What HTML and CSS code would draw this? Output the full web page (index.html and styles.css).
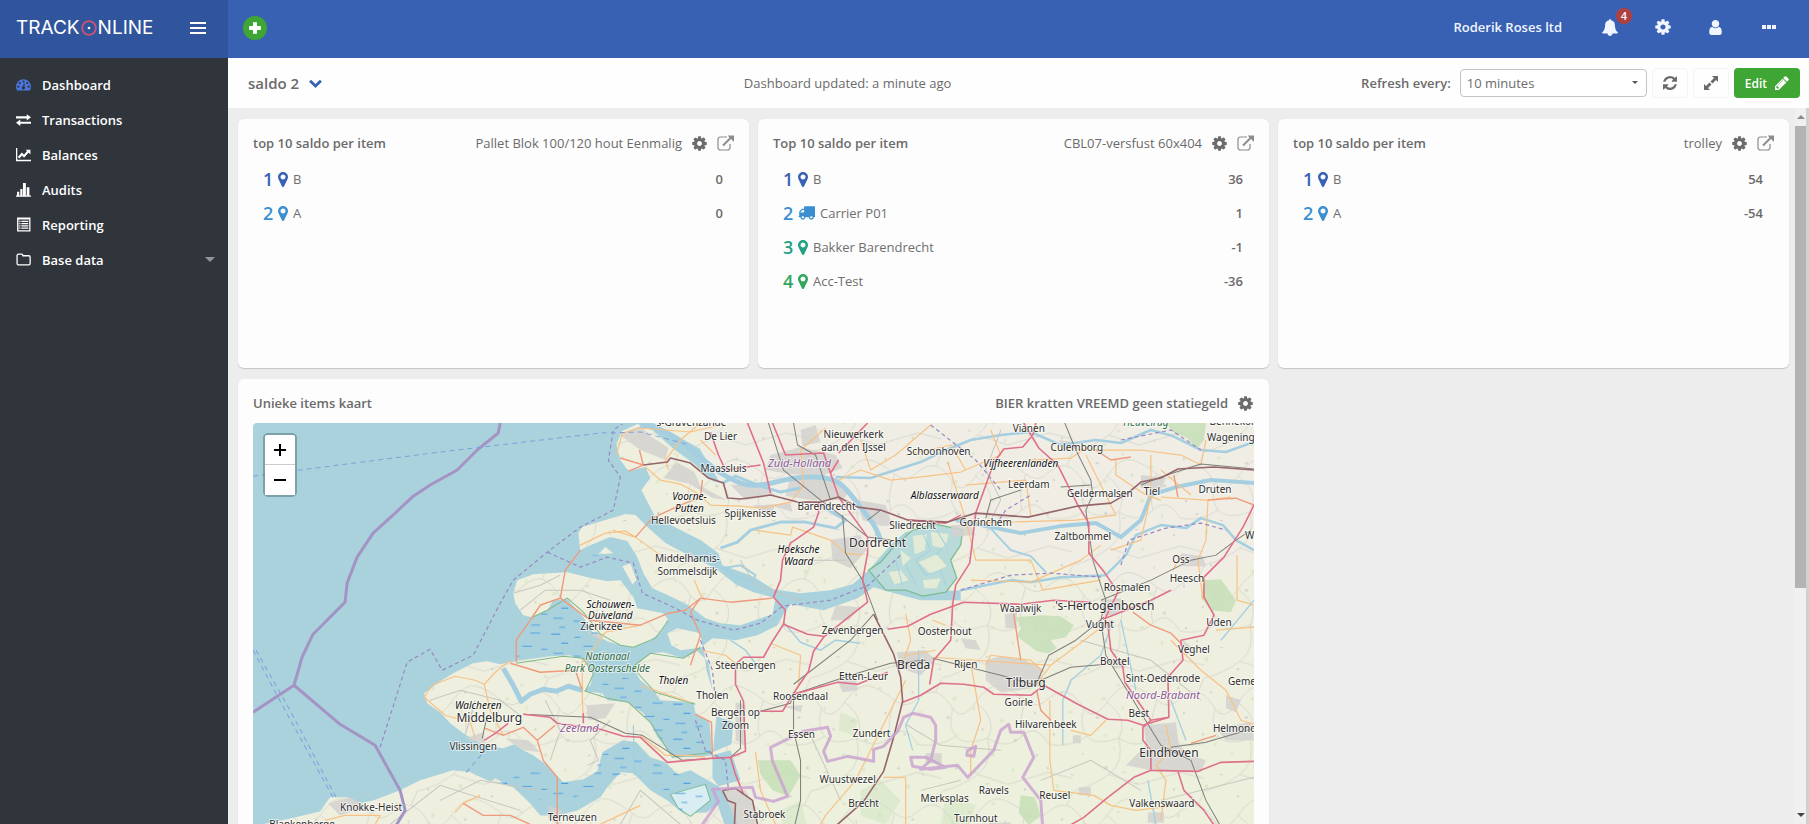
FILE: index.html
```html
<!DOCTYPE html>
<html lang="en">
<head>
<meta charset="utf-8">
<title>TrackOnline - Dashboard</title>
<link rel="stylesheet" href="styles.css">
</head>
<body>
<svg class="defs" aria-hidden="true">
  <symbol id="cog" viewBox="0 0 1792 1792"><path d="M1152 896q0-106-75-181t-181-75-181 75-75 181 75 181 181 75 181-75 75-181zm512-109v222q0 12-8 23t-20 13l-185 28q-19 54-39 91 35 50 107 138 10 12 10 25t-9 23q-27 37-99 108t-94 71q-12 0-26-9l-138-108q-44 23-91 38-16 136-29 186-7 28-36 28h-222q-14 0-24.500-8.500t-11.500-21.500l-28-184q-49-16-90-37l-141 107q-10 9-25 9-14 0-25-11-126-114-165-168-7-10-7-23 0-12 8-23 15-21 51-66.500t54-70.500q-27-50-41-99l-183-27q-13-2-21-12.500t-8-23.500v-222q0-12 8-23t19-13l186-28q14-46 39-92-40-57-107-138-10-12-10-24 0-10 9-23 26-36 98.500-107.500t94.500-71.500q13 0 26 10l138 107q44-23 91-38 16-136 29-186 7-28 36-28h222q14 0 24.500 8.500t11.500 21.500l28 184q49 16 90 37l142-107q9-9 24-9 13 0 25 10 129 119 165 170 7 8 7 22 0 12-8 23-15 21-51 66.500t-54 70.500q26 50 41 98l183 28q13 2 21 12.500t8 23.500z"/></symbol>
  <symbol id="pin" viewBox="384 128 1024 1536"><path d="M1152 640q0-106-75-181t-181-75-181 75-75 181 75 181 181 75 181-75 75-181zm256 0q0 109-33 179l-364 774q-16 33-47.500 52t-67.500 19-67.500-19-46.500-52l-365-774q-33-70-33-179 0-212 150-362t362-150 362 150 150 362z"/></symbol>
  <symbol id="truck" viewBox="0 256 1792 1408"><path d="M640 1408q0-52-38-90t-90-38-90 38-38 90 38 90 90 38 90-38 38-90zm-384-512h384v-256h-158q-13 0-22 9l-195 195q-9 9-9 22v30zm1280 512q0-52-38-90t-90-38-90 38-38 90 38 90 90 38 90-38 38-90zm256-1088v1024q0 15-4 26.500t-13.500 18.500-16.500 11.500-23.500 6-22.500 2-25.500 0-22.500-.5q0 106-75 181t-181 75-181-75-75-181h-384q0 106-75 181t-181 75-181-75-75-181h-64q-3 0-22.500.5t-25.500 0-22.500-2-23.500-6-16.500-11.500-13.500-18.500-4-26.500q0-26 19-45t45-19v-320q0-8-.5-35t0-38 2.500-34.500 6.500-37 14-30.500 22.500-30l198-198q19-19 50.500-32t58.500-13h160v-192q0-26 19-45t45-19h1024q26 0 45 19t19 45z"/></symbol>
  <symbol id="user" viewBox="256 128 1280 1536"><path d="M1536 1399q0 109-62.500 187t-150.500 78h-854q-88 0-150.500-78t-62.500-187q0-85 8.500-160.500t31.500-152 58.500-131 94-89 134.500-34.500q131 128 313 128t313-128q76 0 134.500 34.500t94 89 58.500 131 31.500 152 8.500 160.500zm-256-887q0 159-112.500 271.500t-271.500 112.500-271.500-112.500-112.500-271.500 112.500-271.500 271.500-112.500 271.500 112.500 112.500 271.500z"/></symbol>
  <symbol id="refresh" viewBox="128 128 1536 1536"><path d="M1639 1056q0 5-1 7-64 268-268 434.500t-478 166.500q-146 0-282.500-55t-243.500-157l-129 129q-19 19-45 19t-45-19-19-45v-448q0-26 19-45t45-19h448q26 0 45 19t19 45-19 45l-137 137q71 66 161 102t187 36q134 0 250-65t186-179q11-17 53-117 8-23 30-23h192q13 0 22.500 9.500t9.500 22.500zm25-800v448q0 26-19 45t-45 19h-448q-26 0-45-19t-19-45 19-45l138-138q-148-137-349-137-134 0-250 65t-186 179q-11 17-53 117-8 23-30 23h-199q-13 0-22.500-9.500t-9.500-22.500v-7q65-268 270-434.500t480-166.500q146 0 284 55.500t245 156.500l130-129q19-19 45-19t45 19 19 45z"/></symbol>
  <symbol id="pencil" viewBox="128 128 1536 1536"><path d="M491 1536l91-91-235-235-91 91v107h128v128h107zm523-928q0-22-22-22-10 0-17 7l-542 542q-7 7-7 17 0 22 22 22 10 0 17-7l542-542q7-7 7-17zm-54-192l416 416-832 832h-416v-416zm683 96q0 53-37 90l-166 166-416-416 166-165q36-38 90-38 53 0 91 38l235 234q37 39 37 91z"/></symbol>
  <symbol id="bell" viewBox="64 0 1664 1792"><path d="M1728 1408q0 52-38 90t-90 38h-448q0 106-75 181t-181 75-181-75-75-181h-448q-52 0-90-38t-38-90q50-42 91-88t85-119.500 74.500-158.500 50-206 19.500-260q0-152 117-282.500t307-158.500q-8-19-8-39 0-40 28-68t68-28 68 28 28 68q0 20-8 39 190 28 307 158.500t117 282.500q0 139 19.500 260t50 206 74.500 158.500 85 119.500 91 88z"/></symbol>
  <symbol id="external" viewBox="0 0 17 16"><path d="M10 2H3.500A2.500 2.500 0 0 0 1 4.500v8A2.500 2.500 0 0 0 3.500 15h7a2.500 2.500 0 0 0 2.500-2.500V9" fill="none" stroke="currentColor" stroke-width="1.200"/><path d="M6 10.500 14 2.500" stroke="currentColor" stroke-width="2"/><path d="M10.500.5H17V7z"/></symbol>
  <symbol id="expand" viewBox="0 0 14 14"><path d="M8 0h6v6l-2-2-3.500 3.500L6.500 5.500 10 2zM6 14H0V8l2 2 3.500-3.500 2 2L4 12z"/></symbol>
</svg>

<div class="app">
  <aside class="sidebar">
    <div class="brand">
      <a class="logo" href="#" aria-label="TrackOnline"><span>TRACK</span><svg class="logo-o" viewBox="0 0 14 14"><circle cx="7" cy="7" r="6" fill="none" stroke="#cf5274" stroke-width="1.600"/><circle cx="7" cy="7" r="1.200" fill="#fff"/></svg><span>NLINE</span></a>
      <button class="menu" aria-label="Toggle menu"><i></i><i></i><i></i></button>
    </div>
    <nav class="nav">
      <a href="#"><svg class="nav-icon blue" viewBox="0 0 14 14"><path fill-rule="evenodd" d="M7 2a7 7 0 0 0-6 10.500h12A7 7 0 0 0 7 2zM7 3.200a1 1 0 1 1 0 2 1 1 0 0 1 0-2zM3.500 4.700a1 1 0 1 1 0 2 1 1 0 0 1 0-2zM2.200 8a1 1 0 1 1 0 2 1 1 0 0 1 0-2zM11.800 8a1 1 0 1 1 0 2 1 1 0 0 1 0-2zM10.500 4.700a1 1 0 1 1 0 2 1 1 0 0 1 0-2zM8.300 6l-.6 2.800a1.500 1.500 0 1 1-1.100-.2L7.400 5.800z"/></svg><span>Dashboard</span></a>
      <a href="#"><svg class="nav-icon" viewBox="0 0 14 14"><path d="M0 4h10V2l4 3-4 3V6H0zM14 9H4V7L0 10l4 3v-2h10z"/></svg><span>Transactions</span></a>
      <a href="#"><svg class="nav-icon" viewBox="0 0 14 14"><path d="M0 1h1.200v11H14v1.200H0z"/><path d="M2.500 10 5.500 6.500l2 2L11.500 4" fill="none" stroke="currentColor" stroke-width="2"/><path d="M9 2.500h4.500V7z"/></svg><span>Balances</span></a>
      <a href="#"><svg class="nav-icon" viewBox="0 0 14 14"><path d="M0 12.500h14v1.300H0zM1 9h2v4H1zM4 6.500h2V13H4zM6.500 1h2.700v12H6.500zM10 5h2.500v8H10z"/></svg><span>Audits</span></a>
      <a href="#"><svg class="nav-icon" viewBox="0 0 14 14"><path fill-rule="evenodd" d="M1 .5h12.500v13H1zM2.300 2.300v10h10v-10z"/><path d="M3 3.500h1.200v1.200H3zM5 3.500h6.500v1.200H5zM3 5.600h1.200v1.200H3zM5 5.600h6.500v1.200H5zM3 7.700h1.200v1.200H3zM5 7.700h6.500v1.200H5zM3 9.800h1.200V11H3zM5 9.800h6.500V11H5z"/></svg><span>Reporting</span></a>
      <a href="#"><svg class="nav-icon" viewBox="0 0 14 14"><path d="M1 3.500Q1 2 2.500 2H5q1.500 0 1.500 1.500H12q1.200 0 1.200 1.300v6q0 1.200-1.200 1.200H2.300Q1 12 1 10.800z" fill="none" stroke="currentColor" stroke-width="1.200"/></svg><span>Base data</span><b class="caret"></b></a>
    </nav>
  </aside>

  <div class="main">
    <header class="topbar">
      <button class="add" aria-label="Add"><svg viewBox="0 0 12 12"><path d="M4.300 1h3.400v3.300H11v3.400H7.700V11H4.300V7.700H1V4.300h3.300z"/></svg></button>
      <div class="account">
        <span class="company">Roderik Roses ltd</span>
        <button class="top-btn" aria-label="Notifications"><svg class="bell"><use href="#bell"/></svg><span class="badge">4</span></button>
        <button class="top-btn" aria-label="Settings"><svg class="cog-top"><use href="#cog"/></svg></button>
        <button class="top-btn" aria-label="User"><svg class="user"><use href="#user"/></svg></button>
        <button class="top-btn" aria-label="More"><svg class="dots" viewBox="0 0 14 4"><path d="M0 0h4v4H0zM5 0h4v4H5zM10 0h4v4h-4z"/></svg></button>
      </div>
    </header>

    <div class="toolbar">
      <button class="picker">saldo 2 <svg viewBox="0 0 12 8"><path d="M1 1.500 6 6.300 11 1.500" fill="none" stroke="currentColor" stroke-width="2.600"/></svg></button>
      <span class="updated">Dashboard updated: a minute ago</span>
      <div class="actions">
        <label for="every">Refresh every:</label>
        <div class="select"><select id="every"><option>10 minutes</option></select></div>
        <button class="square" aria-label="Refresh"><svg><use href="#refresh"/></svg></button>
        <button class="square" aria-label="Full screen"><svg><use href="#expand"/></svg></button>
        <button class="edit">Edit <svg><use href="#pencil"/></svg></button>
      </div>
    </div>

    <div class="content">
      <div class="grid">
        <section class="card">
          <header><h2>top 10 saldo per item</h2><span>Pallet Blok 100/120 hout Eenmalig</span><button aria-label="Settings"><svg class="cog"><use href="#cog"/></svg></button><button aria-label="Open"><svg class="external"><use href="#external"/></svg></button></header>
          <ol>
            <li class="c1"><b>1</b><svg class="pin"><use href="#pin"/></svg><span>B</span><strong>0</strong></li>
            <li class="c2"><b>2</b><svg class="pin"><use href="#pin"/></svg><span>A</span><strong>0</strong></li>
          </ol>
        </section>
        <section class="card">
          <header><h2>Top 10 saldo per item</h2><span>CBL07-versfust 60x404</span><button aria-label="Settings"><svg class="cog"><use href="#cog"/></svg></button><button aria-label="Open"><svg class="external"><use href="#external"/></svg></button></header>
          <ol>
            <li class="c1"><b>1</b><svg class="pin"><use href="#pin"/></svg><span>B</span><strong>36</strong></li>
            <li class="c2"><b>2</b><svg class="truck"><use href="#truck"/></svg><span>Carrier P01</span><strong>1</strong></li>
            <li class="c3"><b>3</b><svg class="pin"><use href="#pin"/></svg><span>Bakker Barendrecht</span><strong>-1</strong></li>
            <li class="c4"><b>4</b><svg class="pin"><use href="#pin"/></svg><span>Acc-Test</span><strong>-36</strong></li>
          </ol>
        </section>
        <section class="card">
          <header><h2>top 10 saldo per item</h2><span>trolley</span><button aria-label="Settings"><svg class="cog"><use href="#cog"/></svg></button><button aria-label="Open"><svg class="external"><use href="#external"/></svg></button></header>
          <ol>
            <li class="c1"><b>1</b><svg class="pin"><use href="#pin"/></svg><span>B</span><strong>54</strong></li>
            <li class="c2"><b>2</b><svg class="pin"><use href="#pin"/></svg><span>A</span><strong>-54</strong></li>
          </ol>
        </section>
        <section class="card wide">
          <header><h2>Unieke items kaart</h2><span class="strong">BIER kratten VREEMD geen statiegeld</span><button aria-label="Settings"><svg class="cog"><use href="#cog"/></svg></button></header>
          <div class="map">
            <svg class="map-art" viewBox="253 423 1000 420" preserveAspectRatio="xMinYMin slice">
              <defs>
                <pattern id="waves" width="61" height="35" patternUnits="userSpaceOnUse"><path d="M2 4h9M25 7h6M42 3h10M12 13h7M34 16h10M53 19h6M4 23h10M24 26h7M43 30h9M10 32h6" stroke="#4f9fe6" stroke-width="1"/></pattern>
                <pattern id="fields" width="149" height="127" patternUnits="userSpaceOnUse"><path d="M3 5h2v2h-2zM27 12h3v1h-3zM61 4h2v3h-2zM91 21h3v1h-3zM129 26h2v2h-2zM44 33h2v2h-2zM17 56h2v2h-2zM73 49h3v1h-3zM110 58h1v3h-1zM139 77h2v2h-2zM52 81h3v2h-3zM9 98h2v2h-2zM87 93h2v2h-2zM119 104h3v2h-3zM38 118h2v1h-2zM70 112h1v2h-1zM141 119h2v2h-2z" fill="#cfd0c8"/><path d="M12 22h3v4h-3zM78 9h4v2h-4zM117 6h2v4h-2zM58 62h4v3h-4zM97 40h3v3h-3zM133 51h3v4h-3zM24 76h4v2h-4zM78 71h2v4h-2zM105 84h4v3h-4zM60 99h3v3h-3zM21 108h3v2h-3zM96 118h4v3h-4z" fill="#dbe8c8"/></pattern>
                <pattern id="lanes" width="131" height="113" patternUnits="userSpaceOnUse"><path d="M0 20Q10 12 18 14T35 30 58 24 84 8 108 22 131 20M18 14 24 0M35 30Q30 48 38 58T70 60Q80 40 58 24M38 58Q20 70 0 66M70 60Q90 72 104 58T131 66M108 22Q100 44 104 58M70 60Q76 84 60 96T24 113M60 96 90 106 131 94M0 94 24 100" fill="none" stroke="#cfcfc8" stroke-width=".7"/></pattern>
                <path id="land" d="M653 423 680 438 702 450 716 466 736 479 728 485 712 481 694 464 672 448 652 430 637 424 622 431 616 444 620 460 628 471 645 467 650 478 641 490 655 517 680 530 700 540 718 553 722 565 750 575 773 589 800 593 830 590 852 584 868 570 890 545 905 532 918 530V545L922 560 905 585 925 592 960 590V600H920L890 592 873 587 857 598 823 610 790 604 783 614 777 625 757 635 735 640 712 638 703 645 706 670 712 690 716 716 733 722 731 744 712 752 712 778 718 786 732 804 738 824V843H1253V423ZM578 533 582 527 605 520 625 514 635 515 647 527 665 543 690 556 715 568 735 584 753 592 775 598 772 614 760 618 740 625 720 623 705 618 688 605 672 597 652 588 643 573 637 557 627 541 610 537 588 546 580 550ZM513 593 517 580 533 574 567 572 587 577 607 581 620 580 633 597 637 608 663 613 668 620 660 632 650 640 633 647 620 645 607 641 593 633 583 617 567 599 553 600 547 610 532 617 523 615 515 603ZM424 693 440 681 455 672 473 663 487 661 500 664 520 660 550 656 570 655 582 659 593 673 590 685 583 691 602 693 607 700 627 702 643 713 650 723 657 737 673 757 697 757 712 755 730 750 740 780 718 786 690 770 677 774 665 762 650 757 636 742 623 740 612 746 602 752 597 771 583 779 563 782 547 765 533 755 523 750 514 744 503 748 483 745 463 733 450 723 440 712 427 703ZM632 667 650 653 663 652 683 658 697 651 708 662 712 690 716 716 712 757 709 722 695 713 693 702 660 700 653 690 640 680ZM667 633 677 628 700 633 702 647 680 650 671 645ZM253 843 262 824 290 818 320 811 330 797 347 797 358 803 373 800 400 790 420 780 453 770 470 772 487 780 513 787 530 803 540 815 557 815 577 810 600 797 607 787 620 772 633 773 650 790 667 800 683 813 706 812 717 804 724 824V843ZM598 554 605 547 613 553ZM622 566 630 563 636 580 632 584ZM495 778 502 782 490 782Z"/>
              </defs>
              <rect x="253" y="423" width="1000" height="420" fill="#aad2dd"/>
              <use href="#land" fill="#efefdf"/>
              <path d="M700 423H1253V560L1170 600 1040 560 940 545 905 530 850 550 780 520 730 500 700 450Z" fill="#f0eee4"/>
              <path d="M780 730H1253V843H750Z" fill="#ecf0dc"/>
              <use href="#land" fill="url(#lanes)"/><use href="#land" fill="url(#fields)"/>

              <g class="wood">
                <path d="M1015 617 1040 615 1060 616 1073 625 1065 637 1050 640 1056 648 1048 653 1036 651 1016 636 1020 628Z"/>
                <path d="M1165 423H1205L1203 440 1196 449 1186 438 1172 432Z"/>
                <path d="M1203 580 1220 579 1235 600 1230 612 1210 610 1200 597Z"/>
                <path d="M757 760 790 760 800 775 788 796 772 790 760 774Z"/>
                <path d="M1020 795 1034 797 1040 815 1028 825 1018 812Z"/>
                <path class="faint" d="M860 790 880 780 900 800 885 824 860 815ZM945 795 975 805 968 824 940 824ZM780 810 800 800 806 824H782ZM840 712 858 720 852 735 838 730Z"/>
              </g>
              <path d="M868 570 880 562 892 548 912 530 935 524 962 530 960 545 950 560 956 578 945 592 922 596 905 590 885 590Z" fill="#b8dbd9" stroke="#7dbb92" stroke-width="1.300"/>
              <path d="M912 536 926 534 924 550 914 554ZM930 532 948 534 944 548 932 546ZM900 550 910 558 902 566ZM918 562 936 554 946 566 930 574ZM888 572 900 570 908 580 894 584ZM922 580 940 578 936 588 924 588Z" fill="#e3ebd6"/>
              <path d="M922 533 930 550 915 560 925 575 940 570 945 585M936 530 945 545 935 555M905 565 916 585M895 560 902 585" class="stream"/>
              <g class="urban">
                <path d="M663 478 676 462 694 472 700 486 726 500 712 498 690 484ZM618 434 640 426 650 436 668 448 665 460 640 450Z"/>
                <path d="M770 455 800 447 835 455 842 468 820 476 790 474 765 470ZM790 476 830 478 850 490 842 500 810 500 785 496ZM730 485 760 484 775 495 745 500ZM800 430 815 425 820 442 802 446ZM857 500 885 505 890 520 905 525 880 526 862 520ZM830 540 860 535 866 550 850 568 832 560ZM752 505 775 505 770 515ZM770 505 790 503 792 512Z"/>
                <path d="M896 652 925 650 935 660 920 675 900 668ZM860 607 848 620 830 620 835 605ZM783 706 802 705 800 712ZM837 680 855 676 857 690 842 692ZM735 702 745 705 744 745 735 740Z"/>
                <path d="M985 660 1000 656 1025 660 1040 668 1042 685 1020 690 1000 692 985 680ZM1004 614 1016 612 1016 628 1005 628ZM1100 600 1120 598 1122 612 1104 616ZM1143 725 1175 722 1178 745 1190 755 1205 760 1200 772 1150 770 1125 765 1145 745ZM1180 553 1202 556 1205 566 1182 566ZM950 525 970 525 975 535 952 537ZM960 638 975 640 980 650 965 648ZM1215 728 1250 722 1253 740 1225 740ZM1140 475 1165 478 1160 490 1140 488ZM1058 440 1072 442 1066 452ZM1195 650 1185 655 1182 640ZM1225 695 1240 700 1235 712 1225 708Z"/>
                <path d="M465 738 483 732 485 744ZM505 738 528 740 540 752 524 750 515 745ZM586 705 615 703 605 718 588 720ZM690 550 695 558 684 562ZM328 803 350 797 368 806 340 815ZM548 805 562 810 558 824 548 818ZM586 632 605 634 600 640Z"/>
                <path d="M722 790 745 790 755 808 755 843 735 843 733 815Z"/>
                <path d="M925 753h16v10h-16zM988 822h22v14h-22zM1078 787h12v8h-12zM1147 812h16v10h-16zM1072 735h8v8h-8zM1112 660h12v8h-12z"/>
              </g>
              <g class="river">
                <path d="M640 425Q665 428 685 445T716 470T740 483 775 482 815 477 840 484 856 502 870 520 880 540" stroke-width="5"/>
                <path d="M722 483 735 476 760 486 780 492 800 488" stroke-width="3"/>
                <path d="M835 477 870 478 895 470 920 462 945 450 970 440 1000 435 1030 432 1060 445 1095 440 1120 443 1150 430 1172 436 1200 450 1225 452 1253 442" stroke-width="2.500"/>
                <path d="M820 505 845 520 835 528 805 522 780 522 750 530 737 542 720 548" stroke-width="3"/>
                <path d="M955 520 990 527 1020 533 1060 526 1095 523 1120 537 1140 520 1150 495 1175 487 1210 480 1253 483" stroke-width="4"/>
                <path d="M960 590 985 585 1010 580 1030 582 1060 577 1085 576 1105 575 1125 555 1135 535 1160 525 1185 528 1200 518 1222 525 1235 540 1253 550" stroke-width="2.500"/>
                <path d="M503 668 513 685 521 701 530 694 543 689 556 691 568 686 582 690" stroke-width="5"/>
                <path d="M985 523 1010 550 1030 556 1045 572" stroke-width="2"/>
                <path d="M783 622 800 642 820 650 835 640 860 643M730 640 745 650 760 670" stroke-width="1.500"/>
                <path d="M1062 745V700L1070 680 1100 655 1112 620M1253 600 1220 640M1170 700 1185 740M1147 780 1155 824M918 650V700L905 725 912 750M1120 620 1135 690M633 725 634 775" stroke-width="1.300"/>
                <path d="M722 568 740 565 755 575 752 582 735 575Z" stroke-width="2"/>
              </g>
              <path d="M532 617 553 602 567 600 583 617 600 635 590 650 583 658 530 658 516 662 518 640ZM597 674 640 680 655 700 690 703 695 715 710 722 710 753 673 755 655 733 627 702 605 697 590 690ZM600 756 612 748 625 745 660 765 700 785 715 790 715 800 690 790 660 790 630 770 605 780 570 800 540 800 500 782 530 770 590 785ZM560 552 600 555 585 565Z" fill="url(#waves)"/>
              <path d="M670 794 705 784 710 800 690 816 678 808Z" fill="#d8eef2" stroke="#7dbb92"/><path d="M670 794 705 784 710 800 690 816 678 808Z" fill="url(#waves)"/>
              <path d="M532 617 547 610 567 598 583 612 600 634 620 645 633 647 655 638 668 620M516 663 563 656 583 658 593 674 585 691 607 698 628 702 650 722 672 757 712 752M632 667 650 653 683 658 700 647M632 667 655 692 695 704" class="park"/>

              <g class="small">
                <path d="M513 593 540 585 560 575M520 610 545 590 580 590 610 600M430 700 460 690 500 700 520 715M440 800 480 780 540 790M390 824 440 785 520 810M620 824 640 790 680 824M475 700 465 735M610 720 590 740 598 760 587 765M545 700 560 730 550 760M1000 430 985 470 1000 500 990 520M800 560 845 560M740 560 755 585 800 600"/>
                <path d="M905 724 940 745 1000 750M960 780 920 790M1040 780 1090 760 1140 790M1080 640 1150 660 1200 700M810 735 840 800M1160 800 1253 777"/>
              </g>
              <g class="secondary">
                <path d="M424 697 432 685 455 676 475 680 484 684 495 672 510 660M484 684 490 710 503 735M424 697 445 715 470 722 475 738M582 659V700L583 718M645 467 660 480 680 484 698 494 710 505 740 506 760 508 790 502 803 485 800 450 825 428M668 470 665 460 680 440 700 423M623 433 640 428 690 432 720 425M616 455 622 433M700 440 715 455M580 545 605 533 625 531 635 537 660 555M560 598 540 605 530 620M640 625 605 632 592 650 582 670"/>
                <path d="M694 580 700 595 705 600M755 530 790 535 792 527 830 540 845 553 862 555M635 537 612 530M700 650 725 655 737 665M690 702 640 685M770 643 800 655 798 685M838 480 860 470 890 480 910 478 960 472 1000 455 990 430M860 440 870 470 895 455 930 425M905 455 950 445 965 470M947 462 965 520 975 560 1030 560 1042 590 1100 580M970 580 1030 582 1080 560 1100 545"/>
                <path d="M965 485 1000 482 1025 480 1030 515M1030 460 1070 458 1090 445M1085 455 1100 485 1115 515 1075 520 970 523M1115 460 1115 475 1145 495 1160 500M1060 448 1100 450 1140 450 1180 455 1200 465 1205 440M1150 455 1150 490M1150 495 1140 540 1110 550M1207 500 1205 540 1197 560 1202 600M1160 497 1205 500 1230 497M1190 495 1160 470"/>
                <path d="M970 663 980 720 970 750 970 775M985 665 990 655 1030 660 1043 672M1049 700V760L1053 790 1093 795 1110 805 1135 810 1175 805M1070 730 1090 735 1105 720M1165 725 1170 750 1155 765 1165 780 1160 820M1170 640 1200 670 1225 690 1240 720 1253 724M1236 555V600L1253 605M1215 630 1253 627M905 680 880 730 855 780 825 815 820 824M905 655 935 650M755 752 760 790 775 824M903 660 910 640 905 614M1110 620 1050 665 1035 685M883 777 905 777 905 824M932 657 975 660 1050 665M932 620 945 625M600 824 640 805M325 820 345 815 380 815 375 824M455 812 463 803 480 795"/>
                <path d="M705 757 690 755 665 755 640 735M1172 570 1180 555"/>
              </g>
              <g class="trunk">
                <path d="M516 662 516 640 530 620 540 605 560 598 565 570 580 550M635 537 652 518 680 505 700 497 702 480M560 598 590 620 640 625 668 613 685 610 700 598 730 602 772 598M700 598 690 612 700 635 690 665M695 714 711 722 712 757M510 663 540 672 575 670 582 690M463 803 483 815 510 815 530 824M557 843V777L543 760 537 740 555 725M537 740 523 727 503 735 485 728M628 471 643 465 639 450M620 458 643 465M1013 614 1020 660M1036 690 1040 710 1050 720M1132 612 1150 625 1170 633 1182 645M1173 475 1177 497M1207 500 1235 498 1253 505M1190 743 1215 735M1095 450 1110 460 1130 457"/>
              </g>
              <g class="rail">
                <path d="M523 714 590 717 625 733 642 735 682 760 730 757 740 748V700M768 423 783 470 820 500 840 515 867 537 890 540M793 423 797 445 815 455 830 500M842 515 845 553 862 580 877 620M793 684 850 640 873 614M793 694 850 675 890 663 925 660M760 711 790 703 793 692 793 730 800 760V800L790 843M482 738 487 715M1064 423 1075 450 1090 480 1092 495 1085 510 1092 560 1100 585 1105 600 1100 620 1105 655 1120 680 1160 745 1190 760 1205 800 1222 830M932 658 1000 675 1035 685 1048 655 1075 640 1090 628 1103 617M1040 680 1070 667 1105 664M1100 600 1150 580 1190 560 1215 555 1235 540 1250 530M1170 747 1205 742 1253 728M1140 485 1160 477 1200 464 1253 469M867 520 880 510M985 518 990 500 1020 490M1060 487 1090 485"/>
              </g>
              <g class="motorway">
                <path d="M1035 423 1032 435 1022 447 1003 449 993 463 975 513 969 563 955 585 952 604 950 640 933 660 929 684M1023 423 1038 448 1057 465 1077 505 1088 523V553L1102 570 1117 592 1104 619 1107 625 1110 650 1122 667 1124 682 1150 720 1168 717 1167 677 1182 660 1180 640 1203 635 1213 615 1203 597V577L1223 557 1242 527 1253 505M1150 720 1142 727V740L1150 750V770L1197 771 1220 762 1253 761M1150 770 1133 777 1107 797 1083 817 1060 830M1177 771 1183 790 1203 810 1218 832"/>
                <path d="M902 702 920 695 940 683 963 684 983 687 993 694 1030 695 1043 685 1077 704 1107 719 1127 720 1142 725 1168 717M1102 619 1130 608 1150 600 1170 590M747 423 763 463 770 493M772 423 785 455 823 453 838 497 857 523 867 537V553L862 580 867 602 853 613 823 637 813 651 808 671 797 687 782 711 760 711M818 502V513L813 527 790 543 782 560 780 580 773 597 785 610 783 624 772 641 763 657 743 657 735 664V684L743 701 745 751 730 757 710 758 667 762 640 737 623 736 600 729 557 723 550 717 523 714M730 757 735 774 743 794M783 624 807 634 823 636M887 629 907 626 930 614 963 602 1020 604 1053 600 1090 602M793 694 837 682 857 684 887 672M710 432 718 455 725 470 760 465M484 740 495 733 508 723M583 713V723M838 453 867 423M830 473 838 460M907 520 945 523 960 515"/>
              </g>
              <g class="dual">
                <path d="M643 465 667 462 670 458 690 463 708 478 723 483 727 498 740 499 770 495 797 502 820 502 838 497 857 507 880 510 907 520 947 522 975 513 1027 517 1077 506 1110 503 1127 493 1140 482 1160 478 1177 469 1213 467 1253 470M873 614 893 654 900 677 902 701 893 737 883 771 863 801 837 824 820 843M722 790 735 788 752 800 757 824M722 790 727 800 735 803 734 824"/>
              </g>
              <path d="M500 423 498 433 477 450 457 470 430 485 412 497 395 513 373 533 357 557 347 583 345 602 313 634 302 657 294 685 253 712M294 685 340 724 375 745 400 790 405 810 393 830" class="sea-border"/>
              <path d="M702 824 718 801 712 789 752 787 755 797 773 801 787 796 772 761 770 747 803 731 827 727 830 736 823 751 827 761 847 756 873 761V749L883 746 897 731 903 717 912 713 930 717 935 725V740L930 760 920 769 957 765 967 777 993 750 1000 730 1008 724 1010 732 1023 732 1033 757 1022 777 1040 800 1043 843M910 757 925 757 945 767 930 769 912 766ZM967 750 975 746 973 756 966 755Z" class="border"/>
              <g class="ferry"><path d="M253 476 440 452 600 433 640 432 690 445M253 650 285 710 333 797M256 650 290 710 336 797M466 772 485 750"/></g>
              <g class="admin"><path d="M380 747 407 662 430 649 442 670 473 655 500 603 513 580 547 552 580 527 613 510 620 477 608 460 613 430 622 424M547 552 580 567 607 557 633 563 642 593 673 607 697 620 733 630 760 623 782 606 830 600 868 585 900 555M695 720 705 750 725 760 728 790M700 640 712 670 715 700M960 590 1010 575 1050 573 1100 577M1120 565 1128 540 1165 528 1200 523 1225 530M995 525 1005 510 1030 495M930 425 975 460 1000 490M1120 440 1170 430 1200 450"/></g>

              <g class="label">
                <text x="690" y="426">'s-Gravenzande</text><text x="720" y="440">De Lier</text><text x="853" y="438">Nieuwerkerk</text><text x="853" y="451">aan den IJssel</text><text x="938" y="455">Schoonhoven</text><text x="1028" y="432">Vianen</text><text x="1076" y="451">Culemborg</text><text x="1206" y="441" class="start">Wageningen</text><text x="1234" y="425">Bennekom</text>
                <text x="723" y="472">Maassluis</text><text x="683" y="524">Hellevoetsluis</text><text x="750" y="517">Spijkenisse</text><text x="826" y="510">Barendrecht</text><text x="912" y="529">Sliedrecht</text><text x="985" y="526">Gorinchem</text><text x="1028" y="488">Leerdam</text><text x="1099" y="497">Geldermalsen</text><text x="1151" y="495">Tiel</text><text x="1214" y="493">Druten</text><text x="1082" y="540">Zaltbommel</text><text x="1180" y="563">Oss</text><text x="1186" y="582">Heesch</text><text x="1126" y="591">Rosmalen</text><text x="1244" y="539" class="start">Wijchen</text>
                <text x="687" y="562">Middelharnis-</text><text x="687" y="575">Sommelsdijk</text><text x="601" y="630">Zierikzee</text><text x="745" y="669">Steenbergen</text><text x="712" y="699">Tholen</text><text x="735" y="716">Bergen op</text><text x="735" y="729">Zoom</text><text x="800" y="700">Roosendaal</text><text x="852" y="634">Zevenbergen</text><text x="944" y="635">Oosterhout</text><text x="1020" y="612">Waalwijk</text><text x="1099" y="628">Vught</text><text x="1218" y="626">Uden</text><text x="1193" y="653">Veghel</text><text x="1114" y="665">Boxtel</text><text x="863" y="680">Etten-Leur</text><text x="965" y="668">Rijen</text><text x="1018" y="706">Goirle</text><text x="1045" y="728">Hilvarenbeek</text><text x="1162" y="682">Sint-Oedenrode</text><text x="1227" y="685" class="start">Gemert</text><text x="1138" y="717">Best</text><text x="1212" y="732" class="start">Helmond</text>
                <text x="473" y="750">Vlissingen</text><text x="371" y="811">Knokke-Heist</text><text x="572" y="821">Terneuzen</text><text x="302" y="828">Blankenberge</text><text x="801" y="738">Essen</text><text x="871" y="737">Zundert</text><text x="847" y="783">Wuustwezel</text><text x="863" y="807">Brecht</text><text x="764" y="818">Stabroek</text><text x="944" y="802">Merksplas</text><text x="993" y="794">Ravels</text><text x="975" y="822">Turnhout</text><text x="1054" y="799">Reusel</text><text x="1161" y="807">Valkenswaard</text>
              </g>
              <g class="label city"><text x="489" y="722">Middelburg</text><text x="877" y="547">Dordrecht</text><text x="913" y="669">Breda</text><text x="1025" y="687">Tilburg</text><text x="1104" y="610">'s-Hertogenbosch</text><text x="1168" y="757">Eindhoven</text></g>
              <g class="label region"><text x="689" y="500">Voorne-</text><text x="689" y="512">Putten</text><text x="798" y="553">Hoeksche</text><text x="798" y="565">Waard</text><text x="944" y="499">Alblasserwaard</text><text x="1020" y="467">Vijfheerenlanden</text><text x="610" y="608">Schouwen-</text><text x="610" y="619">Duiveland</text><text x="673" y="684">Tholen</text><text x="478" y="709">Walcheren</text></g>
              <g class="label nature"><text x="607" y="660">Nationaal</text><text x="607" y="672">Park Oosterschelde</text><text x="1145" y="426">Heuvelrug</text></g>
              <g class="label province"><text x="799" y="467">Zuid-Holland</text><text x="579" y="732">Zeeland</text><text x="1162" y="699">Noord-Brabant</text></g>
            </svg>
            <div class="zoom"><button aria-label="Zoom in"><svg viewBox="0 0 12 12"><path d="M5 0h2v5h5v2H7v5H5V7H0V5h5z"/></svg></button><button aria-label="Zoom out"><svg viewBox="0 0 12 12"><path d="M0 5h12v2H0z"/></svg></button></div>
          </div>
        </section>
      </div>
      <div class="scroll" aria-hidden="true"><i class="up"></i><div class="track"><div class="thumb"></div></div><i class="down"></i></div>
    </div>
  </div>
</div>
</body>
</html>
```
FILE: styles.css
```css
* { box-sizing: border-box; }
body { margin: 0; font-family: "Open Sans", "Noto Sans", sans-serif; font-size: 13px; color: #6b6b6b; background: #ededed; }
button, select { font: inherit; color: inherit; border: 0; background: none; padding: 0; margin: 0; }
a { color: inherit; text-decoration: none; }
svg { display: block; fill: currentColor; flex: none; }
.defs { position: absolute; width: 0; height: 0; }

.app { display: grid; grid-template-columns: 228px minmax(0, 1fr); height: 100vh; overflow: hidden; }
.sidebar { background: #30353c; color: #fff; }
.brand { height: 58px; padding: 0 22px 2px 16px; display: flex; align-items: center; justify-content: space-between; background: #30559d; }
.logo { display: flex; align-items: center; gap: 1px; font: 400 19px/20px Inter, sans-serif; }
.logo-o { width: 16px; height: 16px; }
.menu { display: grid; gap: 3px; width: 16px; }
.menu i { height: 2px; background: #fff; }
.nav { padding-top: 9px; }
.nav a { display: flex; align-items: center; gap: 11px; height: 35px; padding: 0 13px 0 16px; font-weight: 600; }
.nav-icon { width: 15px; height: 15px; }
.nav-icon.blue { color: #4a76dd; }
.caret { margin-left: auto; border: 5px solid transparent; border-top-color: #8f959b; border-bottom: 0; }

.main { display: flex; flex-direction: column; min-width: 0; height: 100vh; }
.topbar { flex: none; height: 58px; padding: 0 14px 2px 15px; display: flex; align-items: center; justify-content: space-between; background: #3961b3; color: #f0f5ff; }
.add { display: grid; place-items: center; width: 24px; height: 24px; border-radius: 50%; background: #3fa535; color: #fff; }
.add svg { width: 14px; height: 14px; }
.account { display: flex; align-items: center; padding-bottom: 2px; }
.company { font-weight: 600; margin-right: 21px; }
.top-btn { position: relative; display: grid; place-items: center; width: 53px; height: 32px; }
.bell { width: 16px; height: 17px; }
.cog-top { width: 18px; height: 18px; }
.user { width: 13px; height: 15px; }
.dots { width: 14px; height: 4px; }
.badge { position: absolute; left: 33px; top: -3px; width: 16px; height: 16px; border-radius: 50%; background: #b04040; color: #fff; font-size: 11px; line-height: 16px; font-weight: 600; }

.toolbar { flex: none; height: 50px; padding: 0 9px 0 20px; display: flex; align-items: center; justify-content: space-between; background: #fefefe; }
.picker { display: flex; align-items: center; gap: 10px; padding-right: 12px; font-size: 15px; font-weight: 600; }
.picker svg { width: 13px; height: 9px; color: #3961b3; }
.actions { display: flex; align-items: center; justify-content: flex-end; }
.actions label { font-weight: 600; margin-right: 9px; }
.select { position: relative; width: 187px; margin-right: 5px; }
.select select { appearance: none; width: 100%; height: 28px; padding: 0 6px; border: 1px solid #c4c4c4; border-radius: 4px; background: #fff; }
.select::after { content: ""; position: absolute; right: 9px; top: 12px; border: 3px solid transparent; border-top-color: #555; border-bottom: 0; }
.square { display: grid; place-items: center; width: 36px; height: 30px; margin-right: 5px; border: 1px solid #f3f3f3; border-radius: 4px; }
.square svg { width: 14px; height: 14px; }
.edit { display: flex; align-items: center; gap: 8px; height: 30px; padding: 0 11px; border-radius: 4px; background: #3fa535; color: #fff; font-weight: 600; font-size: 12px; }
.edit svg { width: 14px; height: 14px; }

.content { flex: 1; min-height: 0; display: grid; grid-template: minmax(0, 1fr) / minmax(0, 1fr) 14px; overflow: hidden; }
.grid { display: grid; grid-template-columns: repeat(3, minmax(0, 1fr)); grid-auto-rows: max-content; gap: 11px 9px; padding: 11px 6px 11px 10px; overflow: hidden; }
.card { min-height: 249px; padding: 0 15px; border-radius: 6px; background: #fdfdfd; box-shadow: 0 1px 1px #c4c4c4; }
.card.wide { grid-column: span 2; padding-bottom: 15px; }
.card header { display: flex; align-items: center; height: 44px; padding-top: 4px; }
.card h2 { margin: 0 auto 0 0; font-size: 13px; font-weight: 600; }
.card header button { margin-left: 9px; }
.card header .strong { font-weight: 600; }
.cog { width: 17px; height: 17px; }
.external { width: 17px; height: 16px; color: #8c8c8c; }
.card ol { list-style: none; margin: -1px 0 0; padding: 0 11px 0 10px; }
.card li { display: flex; align-items: center; height: 34px; }
.card li b { font-size: 18px; font-weight: 600; width: 15px; }
.card li span { color: #6f6f6f; margin-left: 5px; }
.card li strong { margin-left: auto; font-weight: 600; color: #6b6b6b; }
.pin { width: 10px; height: 15px; }
.truck { width: 17px; height: 14px; }
.c1 { color: #3961b3; }
.c2 { color: #3b8fd0; }
.c3 { color: #24a182; }
.c4 { color: #30a65e; }

.map { position: relative; height: 420px; border-radius: 4px 0 0 0; overflow: hidden; }
.map-art { width: 100%; height: 100%; fill: none; }
.zoom { position: absolute; left: 10px; top: 10px; display: grid; border: 2px solid rgba(80, 110, 120, .5); border-radius: 5px; background-clip: padding-box; color: #000; }
.zoom button { display: grid; place-items: center; width: 30px; height: 30px; background: #fff; }
.zoom button:first-child { border-bottom: 1px solid #ccc; border-radius: 2px 2px 0 0; }
.zoom svg { width: 12px; height: 12px; }

.wood path { fill: #c3dfb5; opacity: .8; }
.wood .faint { opacity: .35; }
.urban path { fill: #d3d1cf; opacity: .85; }
.river path, .stream { fill: none; stroke: #a5cfe0; stroke-linejoin: round; }
.park { fill: none; stroke: #7fb98a; stroke-width: 1; }
.small path { fill: none; stroke: #c6c6c0; }
.secondary path { fill: none; stroke: #f7c283; stroke-width: 1.200px; stroke-linejoin: round; }
.trunk path { fill: none; stroke: #ee9a7c; stroke-width: 1.400px; stroke-linejoin: round; }
.rail path { fill: none; stroke: #7e7e7a; stroke-width: 1px; stroke-linejoin: round; }
.motorway path { fill: none; stroke: #e0708a; stroke-width: 1.600px; stroke-linejoin: round; }
.dual path { fill: none; stroke: #96656b; stroke-width: 1.600px; stroke-linejoin: round; }
.sea-border { fill: none; stroke: #a394c4; stroke-width: 3px; stroke-linejoin: round; }
.border { fill: none; stroke: #c9a0cf; stroke-width: 3px; stroke-linejoin: round; opacity: .8; }
.ferry path { fill: none; stroke: #7f9fdc; stroke-dasharray: 5 4; }
.admin path { fill: none; stroke: #9888c2; stroke-width: 1.200px; stroke-dasharray: 4 3; }
.label { font-family: "Noto Sans", sans-serif; font-size: 10px; fill: #2f2f2f; text-anchor: middle; stroke: #fff; stroke-opacity: .6; stroke-width: 2px; paint-order: stroke; stroke-linejoin: round; }
.label .start { text-anchor: start; }
.city { font-size: 12px; }
.region { font-size: 10px; font-style: italic; fill: #111; }
.nature { font-style: italic; fill: #2d6a45; }
.province { font-size: 11px; font-style: italic; fill: #8d5a96; }

.scroll { display: flex; flex-direction: column; align-items: stretch; border-right: 3px solid #d0d0d0; background: #f0f0f0; }
.scroll .up, .scroll .down { height: 18px; display: grid; place-items: center; }
.scroll .up::after, .scroll .down::after { content: ""; border: 4px solid transparent; }
.scroll .up::after { border-bottom-color: #8a8a8a; border-top: 0; }
.scroll .down::after { border-top-color: #444; border-bottom: 0; }
.track { flex: 1; }
.thumb { height: 68%; background: #b3b3b3; }
```
